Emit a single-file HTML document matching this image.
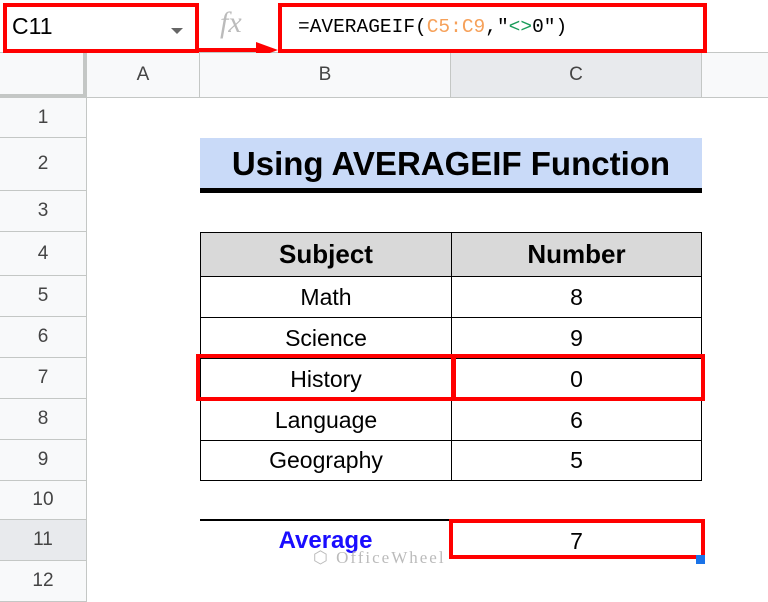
<!DOCTYPE html>
<html><head><style>
*{margin:0;padding:0;box-sizing:border-box}
body{width:768px;height:600px;overflow:hidden;background:#fff;font-family:"Liberation Sans",Arial,sans-serif;position:relative}
.a{position:absolute}
.mono{font-family:"Liberation Mono","DejaVu Sans Mono",monospace}
.rh{position:absolute;left:0;width:87px;background:#f8f9fa;border-bottom:1px solid #c4c7c5;border-right:1px solid #c4c7c5;color:#444;font-size:19px;display:flex;align-items:center;justify-content:center}
.ch{position:absolute;top:53px;height:45px;background:#f8f9fa;border-right:1px solid #c4c7c5;border-bottom:1px solid #c4c7c5;color:#444;font-size:19px;display:flex;align-items:center;justify-content:center}
.c{position:absolute;display:flex;align-items:center;justify-content:center;font-size:23px;color:#000;border:1px solid #000}
.red{position:absolute;border:4px solid #f00}
</style></head><body>
<div class="a" style="left:0;top:0;width:768px;height:53px;background:#fff;border-bottom:1px solid #c4c7c5"></div>
<div class="a" style="left:12px;top:13px;font-size:23px;color:#000">C11</div>
<div class="a" style="left:171px;top:28px;width:0;height:0;border-left:6px solid transparent;border-right:6px solid transparent;border-top:6px solid #666"></div>
<div class="a" style="left:220px;top:6px;font-family:'Liberation Serif',serif;font-style:italic;font-size:30px;color:#bbb">fx</div>
<div class="a mono" style="left:298px;top:16px;font-size:19.5px;color:#000">=AVERAGEIF(<span style="color:#f6a15a">C5:C9</span>,"<span style="color:#1a9c5a">&lt;&gt;</span>0")</div>
<div class="red" style="left:3px;top:3px;width:196px;height:50px"></div>
<div class="red" style="left:278px;top:3px;width:429px;height:50px"></div>
<div class="a" style="left:199px;top:48px;width:60px;height:4px;background:#f00"></div>
<div class="a" style="left:256px;top:42px;width:0;height:0;border-top:8px solid transparent;border-bottom:8px solid transparent;border-left:22px solid #f00"></div>
<div class="ch" style="left:0;width:87px;border-right:4px solid #c4c7c5;border-bottom:4px solid #c4c7c5"></div>
<div class="ch" style="left:87px;width:113px">A</div>
<div class="ch" style="left:200px;width:251px">B</div>
<div class="ch" style="left:451px;width:251px;background:#e8eaed">C</div>
<div class="ch" style="left:702px;width:66px;border-right:none"></div>
<div class="rh" style="top:98px;height:40px">1</div>
<div class="rh" style="top:138px;height:53px">2</div>
<div class="rh" style="top:191px;height:41px">3</div>
<div class="rh" style="top:232px;height:44px">4</div>
<div class="rh" style="top:276px;height:41px">5</div>
<div class="rh" style="top:317px;height:41px">6</div>
<div class="rh" style="top:358px;height:41px">7</div>
<div class="rh" style="top:399px;height:41px">8</div>
<div class="rh" style="top:440px;height:41px">9</div>
<div class="rh" style="top:481px;height:39px">10</div>
<div class="rh" style="top:520px;height:41px;background:#e8eaed">11</div>
<div class="rh" style="top:561px;height:41px">12</div>
<div class="a" style="left:200px;top:138px;width:502px;height:51px;background:#c9daf8;display:flex;align-items:center;justify-content:center;font-weight:bold;font-size:33px;color:#000">Using AVERAGEIF Function</div>
<div class="a" style="left:200px;top:188px;width:502px;height:5px;background:#000"></div>
<div class="c" style="left:200px;top:232px;width:252px;height:45px;background:#d9d9d9;font-weight:bold;font-size:26px">Subject</div>
<div class="c" style="left:451px;top:232px;width:251px;height:45px;background:#d9d9d9;font-weight:bold;font-size:26px">Number</div>
<div class="c" style="left:200px;top:276px;width:252px;height:42px">Math</div>
<div class="c" style="left:451px;top:276px;width:251px;height:42px">8</div>
<div class="c" style="left:200px;top:317px;width:252px;height:42px">Science</div>
<div class="c" style="left:451px;top:317px;width:251px;height:42px">9</div>
<div class="c" style="left:200px;top:358px;width:252px;height:42px">History</div>
<div class="c" style="left:451px;top:358px;width:251px;height:42px">0</div>
<div class="c" style="left:200px;top:399px;width:252px;height:42px">Language</div>
<div class="c" style="left:451px;top:399px;width:251px;height:42px">6</div>
<div class="c" style="left:200px;top:440px;width:252px;height:41px">Geography</div>
<div class="c" style="left:451px;top:440px;width:251px;height:41px">5</div>
<div class="red" style="left:196px;top:354px;width:260px;height:47px"></div>
<div class="red" style="left:451px;top:354px;width:254px;height:47px"></div>
<div class="a" style="left:200px;top:519px;width:502px;height:2px;background:#000"></div>
<div class="a" style="left:200px;top:521px;width:251px;height:40px;display:flex;align-items:center;justify-content:center;font-weight:bold;font-size:24px;color:#1a0dff">Average</div>
<div class="a" style="left:451px;top:521px;width:251px;height:40px;display:flex;align-items:center;justify-content:center;font-size:23px">7</div>
<div class="red" style="left:449px;top:519px;width:256px;height:40px"></div>
<div class="a" style="left:696px;top:555px;width:9px;height:9px;background:#1a73e8"></div>
<div class="a" style="left:313px;top:548px;font-family:'Liberation Serif',serif;font-size:17px;color:#bbb;letter-spacing:2px">⬡ OfficeWheel</div>
</body></html>
